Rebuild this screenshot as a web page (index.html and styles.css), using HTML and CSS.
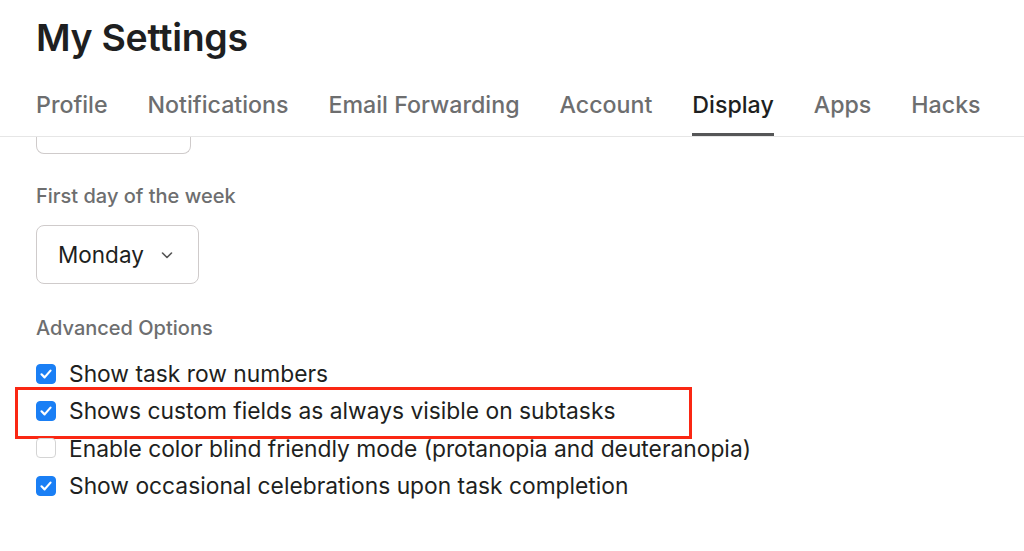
FILE: index.html
```html
<!DOCTYPE html>
<html lang="en">
<head>
<meta charset="utf-8">
<title>My Settings</title>
<link rel="stylesheet" href="styles.css">
</head>
<body>
<div class="page">
  <header class="header">
    <h1 class="title">My Settings</h1>
    <nav class="tabs">
      <span class="tab">Profile</span>
      <span class="tab">Notifications</span>
      <span class="tab">Email Forwarding</span>
      <span class="tab">Account</span>
      <span class="tab active">Display</span>
      <span class="tab">Apps</span>
      <span class="tab">Hacks</span>
    </nav>
  </header>
  <main class="content">
    <div class="cut-select"></div>
    <div class="label first-day">First day of the week</div>
    <div class="select">
      <span class="select-text">Monday</span>
      <svg class="chevron" width="14" height="14" viewBox="0 0 14 14"><path d="M2.5 5 L7 9.5 L11.5 5" fill="none" stroke="#555" stroke-width="1.6" stroke-linecap="round" stroke-linejoin="round"/></svg>
    </div>
    <div class="label advanced">Advanced Options</div>
    <ul class="options">
      <li class="option"><span class="box checked"><svg viewBox="0 0 20 20" width="20" height="20"><path d="M5.5 10.3 L8.6 13.4 L14.5 6.6" fill="none" stroke="#fff" stroke-width="2.2" stroke-linecap="round" stroke-linejoin="round"/></svg></span>Show task row numbers</li>
      <li class="option highlight-row"><span class="box checked"><svg viewBox="0 0 20 20" width="20" height="20"><path d="M5.5 10.3 L8.6 13.4 L14.5 6.6" fill="none" stroke="#fff" stroke-width="2.2" stroke-linecap="round" stroke-linejoin="round"/></svg></span>Shows custom fields as always visible on subtasks<span class="highlight"></span></li>
      <li class="option"><span class="box"></span>Enable color blind friendly mode (protanopia and deuteranopia)</li>
      <li class="option"><span class="box checked"><svg viewBox="0 0 20 20" width="20" height="20"><path d="M5.5 10.3 L8.6 13.4 L14.5 6.6" fill="none" stroke="#fff" stroke-width="2.2" stroke-linecap="round" stroke-linejoin="round"/></svg></span>Show occasional celebrations upon task completion</li>
    </ul>
  </main>
</div>
</body>
</html>
```
FILE: styles.css
```css
* { box-sizing: border-box; }
html, body {
  margin: 0;
  padding: 0;
  background: #ffffff;
}
body {
  font-family: Inter, "Liberation Sans", sans-serif;
  color: #1e1f21;
  overflow: hidden;
}
.page {
  width: 1024px;
  height: 551px;
  position: relative;
}
.header {
  padding-top: 14px;
  border-bottom: 1px solid #e6e6e6;
}
.title {
  margin: 0 0 0 36px;
  font-size: 37.5px;
  font-weight: 600;
  line-height: 48px;
  letter-spacing: -0.3px;
  color: #1e1f21;
}
.tabs {
  display: flex;
  gap: 40px;
  padding-left: 36px;
  margin-top: 29px;
}
.tab {
  font-size: 23.2px;
  font-weight: 500;
  line-height: 28px;
  color: #6d6e6f;
  padding-bottom: 17px;
  position: relative;
}
.tab.active {
  color: #1e1f21;
}
.tab.active::after {
  content: "";
  position: absolute;
  left: 0;
  right: 0;
  bottom: 0;
  height: 3px;
  background: #555657;
}
.content {
  padding-left: 36px;
}
.cut-select {
  width: 155px;
  height: 17px;
  border: 1.5px solid #cfcbcb;
  border-top: none;
  border-radius: 0 0 8px 8px;
}
.label {
  font-size: 20px;
  font-weight: 500;
  color: #6d6e6f;
  line-height: 24px;
}
.first-day {
  margin-top: 30px;
}
.select {
  margin-top: 17px;
  width: 163px;
  height: 59px;
  border: 1.5px solid #cfcbcb;
  border-radius: 8px;
  display: flex;
  align-items: center;
  padding-left: 21px;
  gap: 16px;
}
.select-text {
  font-size: 22.5px;
  line-height: 28px;
  color: #1e1f21;
}
.chevron { display: block; }
.advanced {
  margin-top: 32px;
}
.options {
  list-style: none;
  margin: 15px 0 0 0;
  padding: 0;
}
.option {
  display: flex;
  align-items: center;
  gap: 13px;
  height: 37.3px;
  font-size: 22.8px;
  color: #1e1f21;
  position: relative;
}
.box {
  width: 20px;
  height: 20px;
  border-radius: 4px;
  border: 1px solid #d4d4d4;
  background: #fff;
  flex: none;
  display: flex;
}
.box.checked {
  background: #1a7ff5;
  border-color: #1a7ff5;
}
.box svg { display: block; margin: -1px; }
.highlight {
  position: absolute;
  left: -21px;
  top: -5px;
  width: 677px;
  height: 52px;
  border: 3px solid #fa2713;
  pointer-events: none;
}
```
